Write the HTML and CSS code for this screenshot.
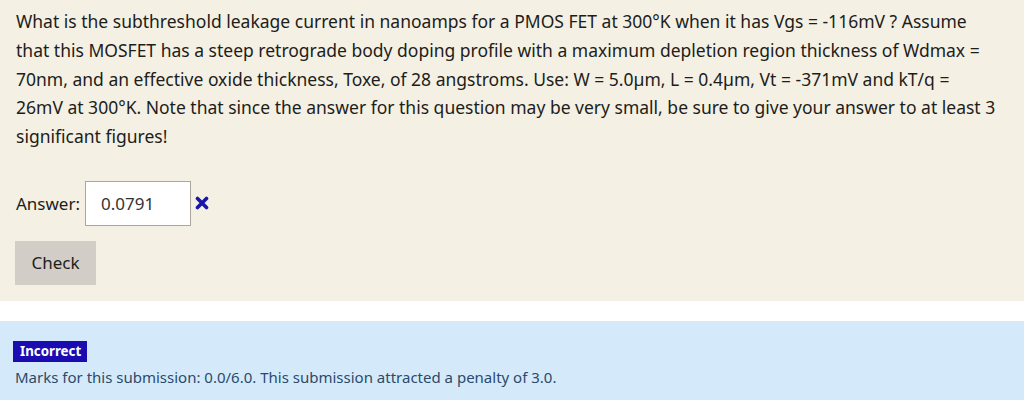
FILE: index.html
```html
<!DOCTYPE html>
<html>
<head>
<meta charset="utf-8">
<link rel="stylesheet" href="styles.css">
</head>
<body>
<div class="que">
  <p class="qtext">What is the subthreshold leakage current in nanoamps for a PMOS FET at 300°K when it has Vgs = -116mV ? Assume<br>that this MOSFET has a steep retrograde body doping profile with a maximum depletion region thickness of Wdmax =<br>70nm, and an effective oxide thickness, Toxe, of 28 angstroms. Use: W = 5.0µm, L = 0.4µm, Vt = -371mV and kT/q =<br>26mV at 300°K. Note that since the answer for this question may be very small, be sure to give your answer to at least 3<br>significant figures!</p>
  <div class="answer">
    <label class="label">Answer:</label>
    <span class="input">0.0791</span>
    <svg class="xicon" width="14" height="14" viewBox="0 0 14 14"><path d="M2.5 2.5 L11.5 11.5 M11.5 2.5 L2.5 11.5" stroke="#1a16a8" stroke-width="3.6" stroke-linecap="round" fill="none"/></svg>
  </div>
  <button class="check">Check</button>
</div>
<div class="gap"></div>
<div class="feedback">
  <span class="badge">Incorrect</span>
  <div class="marks">Marks for this submission: 0.0/6.0. This submission attracted a penalty of 3.0.</div>
</div>
</body>
</html>
```
FILE: styles.css
```css
html, body { margin: 0; padding: 0; background: #fff; }
body { font-family: "Noto Sans", "Open Sans", sans-serif; font-size: 17px; color: #1d1d1b; }
.que { background: #f4f0e3; padding: 7px 16px 15px; min-height: 301px; box-sizing: border-box; }
.qtext { margin: 0; line-height: 28.8px; white-space: nowrap; font-size: 17.5px; }
.answer { display: flex; align-items: center; margin-top: 30px; height: 45px; }
.label { margin-right: 5px; }
.input { box-sizing: border-box; width: 106px; height: 45px; border: 1px solid #aaa69e; background: #fff; color: #333; padding-left: 15px; display: flex; align-items: center; }
.xicon { margin-left: 4px; display: block; }
.check { margin-top: 15px; margin-left: -1px; width: 81px; height: 44px; border: 0; background: #d2cdc6; font-family: inherit; font-size: 17px; color: #1d1d1b; padding: 0; display: block; }
.gap { height: 20px; }
.feedback { background: #d4eafa; padding: 20px 13px 12px; height: 47px; display: flex; flex-direction: column; align-items: flex-start; }
.badge { display: block; background: #1a0cb0; color: #fff; font-weight: bold; font-size: 13.3px; padding: 0 6px 0 7px; line-height: 21px; }
.marks { color: #2b4a6a; margin-top: 3px; line-height: 24px; padding-left: 2px; font-size: 15px; }
```
